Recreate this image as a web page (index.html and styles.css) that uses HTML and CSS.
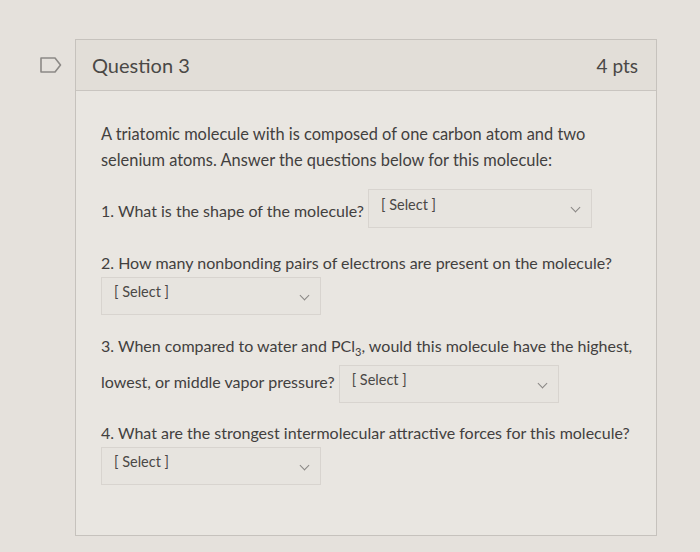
FILE: index.html
```html
<!DOCTYPE html>
<html lang="en">

<head>
    <meta charset="UTF-8">
    <meta name="viewport" content="width=device-width, initial-scale=1.0">
    <title>Question 3</title>

    <link rel="stylesheet" href="styles.css">
</head>

<body>
    <section class="quiz">
        <div class="bookmark">
            <svg width="24" height="18" viewBox="0 0 24 18">
                <path d="M2 2 H16 L21.5 9 L16 16 H2 Z" fill="none" stroke="#8c8986" stroke-width="1.6"
                    stroke-linejoin="round" />
            </svg>
        </div>

        <div class="question_card">
            <div class="question_header">
                <span class="question_name">Question 3</span>
                <span class="question_pts">4 pts</span>
            </div>

            <div class="question_body">
                <p class="intro">A triatomic molecule with is composed of one carbon atom and two selenium atoms.
                    Answer the questions below for this molecule:</p>

                <p class="q q1">1. What is the shape of the molecule?
                    <span class="select sel_wide">[ Select ]<i class="chev"></i></span>
                </p>

                <p class="q q2">2. How many nonbonding pairs of electrons are present on the molecule?<br>
                    <span class="select">[ Select ]<i class="chev"></i></span>
                </p>

                <p class="q q3">3. When compared to water and PCl<sub>3</sub>, would this molecule have the highest,<br>
                    lowest, or middle vapor pressure?
                    <span class="select">[ Select ]<i class="chev"></i></span>
                </p>

                <p class="q q4">4. What are the strongest intermolecular attractive forces for this molecule?<br>
                    <span class="select">[ Select ]<i class="chev"></i></span>
                </p>
            </div>
        </div>
    </section>
</body>

</html>
```
FILE: styles.css
```css
body {
    margin: 0;
    background: #e5e1dc;
    font-family: Lato, "Open Sans", sans-serif;
    color: #42403e;
}

.quiz {
    display: flex;
    padding: 39px 43px 8px 39px;
    gap: 6px;
}

.bookmark {
    width: 30px;
    padding-top: 17px;
}

.question_card {
    flex: 1;
    border: 1px solid #c6c2bd;
    background: #e9e6e1;
}

.question_header {
    display: flex;
    justify-content: space-between;
    align-items: center;
    height: 50px;
    padding: 0 18px 0 16px;
    background: #e2ded8;
    border-bottom: 1px solid #c9c5c0;
}

.question_name {
    font-size: 20px;
    color: #4a4846;
}

.question_pts {
    font-size: 19px;
    color: #4a4846;
}

.question_body {
    padding: 30px 10px 50px 25px;
    font-size: 16px;
    line-height: 26px;
}

.question_body p {
    margin: 0;
}

.intro {
    width: 500px;
    font-size: 16.4px;
}

.q1 {
    margin-top: 24px !important;
}

.q2 {
    margin-top: 22px !important;
}

.q3 {
    margin-top: 13px !important;
    line-height: 36px;
}

.q3 sub {
    font-size: 11px;
    line-height: 0;
}

.q4 {
    margin-top: 17px !important;
}

.select {
    display: inline-flex;
    align-items: center;
    justify-content: space-between;
    box-sizing: border-box;
    width: 220px;
    height: 38px;
    padding: 0 12px 8px 12px;
    vertical-align: middle;
    border: 1px solid #d8d4cf;
    background: #e7e4df;
    font-size: 14.5px;
    line-height: 20px;
    color: #4a4846;
    margin-top: 1px;
}

.sel_wide {
    width: 224px;
    height: 39px;
    margin-top: -8px;
}

.chev {
    width: 6px;
    height: 6px;
    border-right: 1.6px solid #8a8785;
    border-bottom: 1.6px solid #8a8785;
    transform: rotate(45deg);
    margin-top: 6px;
}
```
